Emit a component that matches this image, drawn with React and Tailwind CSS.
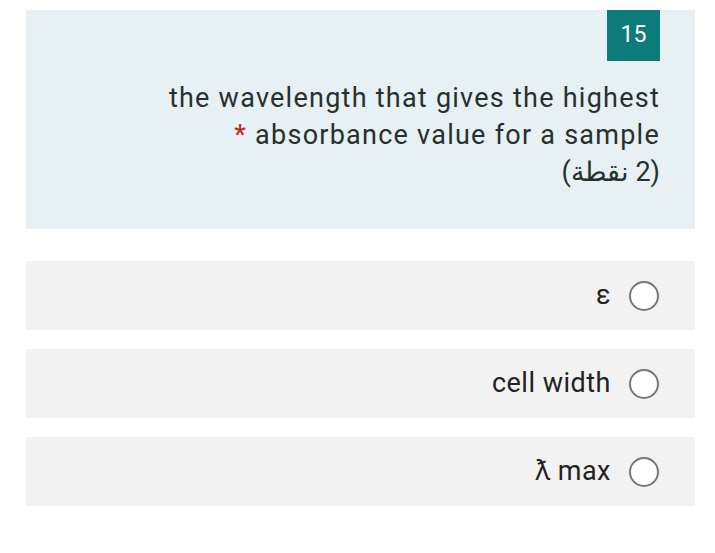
const options = ["ε", "cell width", "ƛ max"];

const App = () => {
  return (
    <div className="min-h-[553px] bg-white pt-[10px] font-['Roboto','Noto_Sans',sans-serif]">
      <div className="ml-[26px] w-[669px]">
        <div className="bg-[#e7f0f2] pr-[35px] pb-[38px]">
          <div className="flex justify-end">
            <div className="flex h-[51px] w-[53px] items-center justify-center bg-[#0e7b7b] text-[23px] text-white">
              15
            </div>
          </div>
          <div className="mt-[19px] text-right text-[27px] leading-[37px] tracking-[1.25px] text-[#26302f]">
            <p>the wavelength that gives the highest</p>
            <p>
              <span className="text-[#c5221f]">*</span> absorbance value for a sample
            </p>
            <p dir="rtl">(2 نقطة)</p>
          </div>
        </div>
        <div className="mt-[32px] flex flex-col gap-[19px]">
          {options.map((opt) => (
            <div
              key={opt}
              className="flex h-[69px] items-center justify-end bg-[#f2f2f2] pr-[36px]"
            >
              <span className="text-[27px] tracking-[0.5px] text-[#222]">{opt}</span>
              <span className="ml-[18px] h-[30px] w-[30px] rounded-full border-2 border-[#777] bg-white" />
            </div>
          ))}
        </div>
      </div>
    </div>
  );
};

export default App;
